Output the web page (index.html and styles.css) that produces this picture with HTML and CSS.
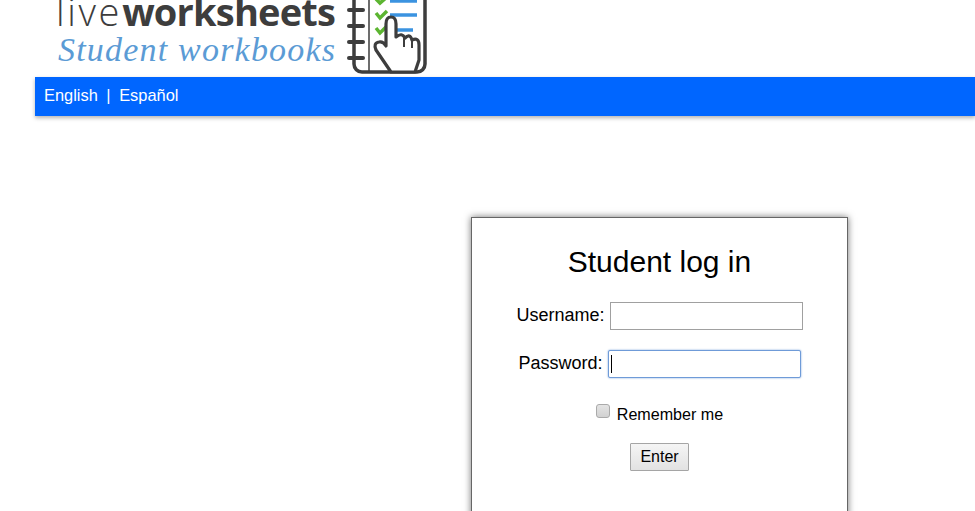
FILE: index.html
```html
<!DOCTYPE html>
<html lang="en">
<head>
    <meta charset="UTF-8">
    <meta name="viewport" content="width=device-width, initial-scale=1.0">
    <title>Student log in</title>
    <link rel="stylesheet" href="styles.css">
</head>
<body>
    <div class="page">
        <div class="logo">
            <div class="logo-text">
                <div class="logo-name"><span class="thin">live</span><b>worksheets</b></div>
                <div class="logo-sub">Student workbooks</div>
            </div>
            <svg class="logo-icon" viewBox="345 0 90 77" width="90" height="77" aria-hidden="true">
                <rect x="354" y="-12" width="71" height="84" rx="8" fill="#fff" stroke="#3d3d3d" stroke-width="3.5"/>
                <path d="M369 -10V71" stroke="#3d3d3d" stroke-width="1.5" fill="none"/>
                <g stroke="#3d3d3d" stroke-width="4" stroke-linecap="round">
                    <path d="M349 10H363"/>
                    <path d="M349 26H363"/>
                    <path d="M349 42H363"/>
                    <path d="M349 58H363"/>
                </g>
                <g stroke="#5cb531" stroke-width="3.5" fill="none">
                    <path d="M376 -1L380 3L387 -3"/>
                    <path d="M376 13L380 18L387 11"/>
                    <path d="M376 28L380 33L387 26"/>
                </g>
                <g stroke="#3b93e0" stroke-width="3.5">
                    <path d="M390 1H417"/>
                    <path d="M390 15H417"/>
                    <path d="M390 30H413"/>
                </g>
                <path d="M391 72L376 50Q373 43 379 42Q383 41 386 46L386 24Q386 17 391 17Q396 17 396 24L396 37Q402 32 405 38Q410 33 412 40Q419 37 419 45L419 60L415 72Z" fill="#fff" stroke="#3d3d3d" stroke-width="3.2" stroke-linejoin="round"/>
                <path d="M404 38V47M412 40V48" stroke="#3d3d3d" stroke-width="2" fill="none"/>
            </svg>
        </div>
        <div class="lang-bar">
            <a href="#">English</a>
            <span class="sep">|</span>
            <a href="#">Español</a>
        </div>
        <form class="login-box">
            <h2>Student log in</h2>
            <div class="field">
                <label for="username">Username:</label>
                <input type="text" id="username">
            </div>
            <div class="field">
                <label for="password">Password:</label>
                <span class="input-wrap">
                    <input type="password" id="password" class="focused">
                    <span class="caret"></span>
                </span>
            </div>
            <div class="remember">
                <input type="checkbox" id="remember">
                <label for="remember">Remember me</label>
            </div>
            <button type="button" class="enter">Enter</button>
        </form>
    </div>
</body>
</html>
```

FILE: styles.css
```css
html, body {
    height: 100%;
    overflow: hidden;
}

body {
    font-family: "Liberation Sans", Arial, sans-serif;
    margin: 0;
    padding: 0;
    background-color: #ffffff;
    color: #000;
}

.page {
    margin-left: 35px;
}

.logo {
    display: flex;
    height: 77px;
    padding-left: 23px;
    overflow: hidden;
}

.logo-text {
    width: 287px;
}

.logo-name {
    margin: -9px 0 3px -2px;
    font-family: "Open Sans", sans-serif;
    font-size: 38px;
    line-height: 40px;
    letter-spacing: -0.8px;
    color: #3d3d3d;
    white-space: nowrap;
}

.logo-name .thin {
    font-weight: 300;
    letter-spacing: 2.65px;
}

.logo-sub {
    font-family: "Liberation Serif", serif;
    font-style: italic;
    font-size: 34px;
    line-height: 32px;
    letter-spacing: 1.2px;
    color: #5b9bd5;
    white-space: nowrap;
}

.logo-icon {
    flex-shrink: 0;
}

.lang-bar {
    height: 39px;
    padding-left: 9px;
    line-height: 37px;
    font-size: 16.4px;
    background-color: #0066ff;
    box-shadow: 0 2px 4px rgba(0, 0, 0, 0.3);
    color: #fff;
}

.lang-bar a {
    color: #fff;
    text-decoration: none;
}

.sep {
    margin: 0 4px;
}

.login-box {
    box-sizing: border-box;
    width: 377px;
    height: 330px;
    margin: 101px 0 0 436px;
    border: 1px solid #666;
    box-shadow: 0 0 7px rgba(0, 0, 0, 0.55);
    text-align: center;
    background-color: #fff;
}

h2 {
    margin: 26px 0 23px;
    font-size: 30px;
    line-height: 35px;
    font-weight: normal;
}

.field {
    display: flex;
    justify-content: center;
    align-items: center;
    gap: 5px;
    height: 28px;
    margin-bottom: 20px;
    font-size: 18px;
}

.field label {
    margin-top: -2px;
}

input[type="text"], input[type="password"] {
    box-sizing: border-box;
    width: 193px;
    height: 28px;
    padding: 0 2px;
    border: 1px solid #a0a0a0;
    background: #fff;
    display: block;
}

input.focused {
    border: 1px solid #6f9bd8;
    border-radius: 2px;
    box-shadow: 0 0 2px #6f9bd8;
}

.input-wrap {
    position: relative;
    display: block;
}

.caret {
    position: absolute;
    left: 3px;
    top: 5px;
    width: 1px;
    height: 18px;
    background-color: #000;
}

.remember {
    display: flex;
    justify-content: center;
    align-items: center;
    gap: 7px;
    height: 20px;
    margin-top: 26px;
    font-size: 16.1px;
}

.remember input {
    width: 14px;
    height: 14px;
    margin: -7px 0 0;
    appearance: none;
    border: 1px solid #aaa;
    border-radius: 3px;
    background: linear-gradient(#e4e4e4, #d2d2d2);
}

.enter {
    display: block;
    width: 59px;
    height: 28px;
    margin: 19px auto 0;
    padding: 0;
    font-family: "Liberation Sans", Arial, sans-serif;
    font-size: 16px;
    color: #000;
    border: 1px solid #a5a5a5;
    border-radius: 1px;
    background: linear-gradient(#f5f5f5, #e2e2e2);
}
```
